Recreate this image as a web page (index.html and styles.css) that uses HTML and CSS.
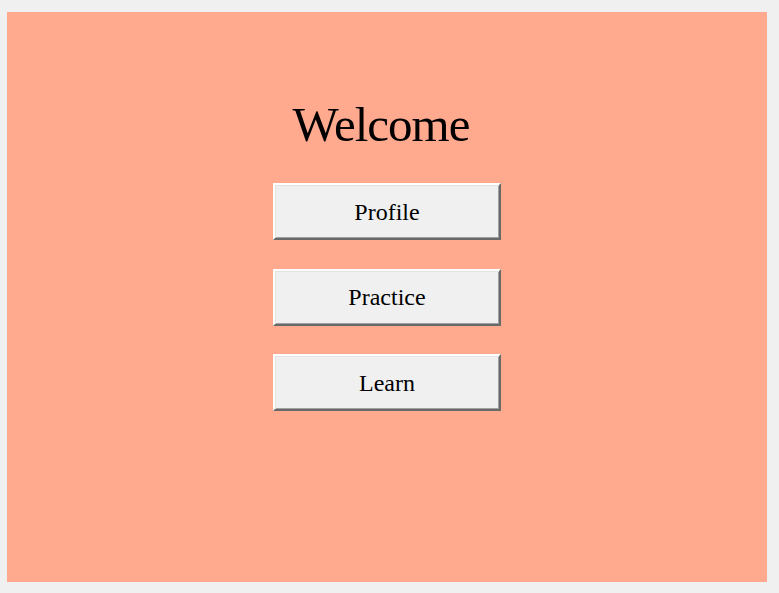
FILE: index.html
```html
<!DOCTYPE html>
<html>
<head>
<meta charset="utf-8">
<link rel="stylesheet" href="styles.css">
</head>
<body>
<div class="panel">
  <h1 class="title">Welcome</h1>
  <div class="menu">
    <button class="btn">Profile</button>
    <button class="btn">Practice</button>
    <button class="btn">Learn</button>
  </div>
</div>
</body>
</html>
```
FILE: styles.css
```css
html, body {
  margin: 0;
  padding: 0;
  background: #f0f0f0;
}
body {
  padding: 12px 0 0 7px;
  font-family: "Liberation Serif", "Times New Roman", serif;
}
.panel {
  width: 760px;
  height: 570px;
  background: #ffa98f;
  display: flex;
  flex-direction: column;
  align-items: center;
  box-sizing: border-box;
  padding-top: 85px;
}
.title {
  margin: 0;
  font-weight: normal;
  font-size: 49px;
  line-height: 56px;
  color: #000;
  letter-spacing: -1px;
  position: relative;
  left: -6px;
}
.menu {
  margin-top: 30px;
  display: flex;
  flex-direction: column;
  gap: 28.5px;
}
.btn {
  width: 228px;
  height: 57px;
  box-sizing: border-box;
  background: #f0f0f0;
  font-family: "Liberation Serif", "Times New Roman", serif;
  font-size: 24px;
  color: #000;
  padding: 1px 0 0 0;
  border-style: solid;
  border-width: 2px;
  border-color: #ffffff #696969 #696969 #ffffff;
  box-shadow: inset 1px 1px 0 #e3e3e3, inset -1px -1px 0 #a0a0a0;
}
```
